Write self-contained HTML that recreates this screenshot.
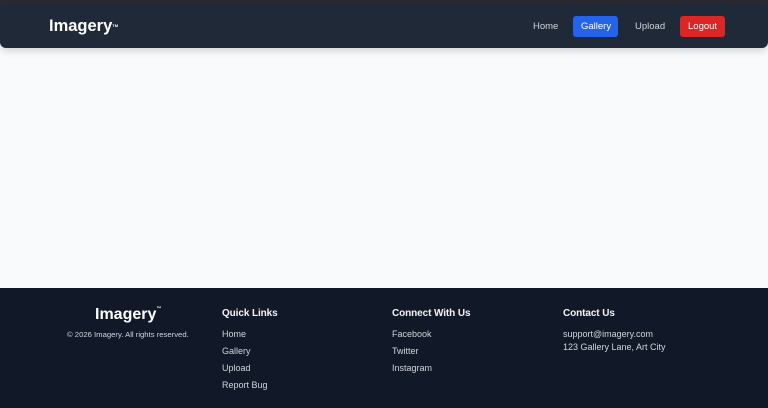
<!DOCTYPE html>
<html><head><style>
*{margin:0;padding:0;box-sizing:border-box}
body{width:768px;height:408px;background:#f8fafc;font-family:"Liberation Sans",sans-serif;position:relative;overflow:hidden}
.top{position:absolute;left:0;top:0;width:768px;height:4px;background:#2a2a30}
nav{position:absolute;left:0;top:4px;width:768px;height:44px;background:#1f2937;border-radius:0 0 6px 6px;box-shadow:0 3px 8px rgba(0,0,0,.15)}
.logo{position:absolute;left:49px;top:13px;color:#fff;font-weight:bold;font-size:16.5px}
.logo sup{font-size:4px;vertical-align:top;position:relative;top:6px}
.nl{position:absolute;top:12px;height:21px;font-size:9.5px;line-height:21px;color:#d1d5db;padding:0 8px;border-radius:3px}
footer{position:absolute;left:0;top:288px;width:768px;height:120px;background:#111827;color:#d1d5db}
.f{position:absolute;font-size:9px}
.h{position:absolute;font-size:10px;font-weight:bold;color:#f3f4f6;letter-spacing:-0.1px}
</style></head><body>
<div class="top"></div>
<nav>
<div class="logo">Imagery<sup>TM</sup></div>
<div class="nl" style="left:525px">Home</div>
<div class="nl" style="left:573px;background:#2563eb;color:#fff;width:45px">Gallery</div>
<div class="nl" style="left:627px">Upload</div>
<div class="nl" style="left:680px;background:#dc2626;color:#fff;width:45px">Logout</div>
</nav>
<footer>
<div style="position:absolute;left:95px;top:18px;color:#fff;font-weight:bold;font-size:16px">Imagery<sup style="font-size:5px;vertical-align:top">™</sup></div>
<div class="f" style="left:67px;top:42px;font-size:7.7px">© 2026 Imagery. All rights reserved.</div>
<div class="h" style="left:222px;top:20px">Quick Links</div>
<div class="f" style="left:222px;top:41px">Home</div>
<div class="f" style="left:222px;top:58px">Gallery</div>
<div class="f" style="left:222px;top:75px">Upload</div>
<div class="f" style="left:222px;top:92px">Report Bug</div>
<div class="h" style="left:392px;top:20px">Connect With Us</div>
<div class="f" style="left:392px;top:41px">Facebook</div>
<div class="f" style="left:392px;top:58px">Twitter</div>
<div class="f" style="left:392px;top:75px">Instagram</div>
<div class="h" style="left:563px;top:20px">Contact Us</div>
<div class="f" style="left:563px;top:41px">support@imagery.com</div>
<div class="f" style="left:563px;top:54px">123 Gallery Lane, Art City</div>
</footer>
</body></html>
